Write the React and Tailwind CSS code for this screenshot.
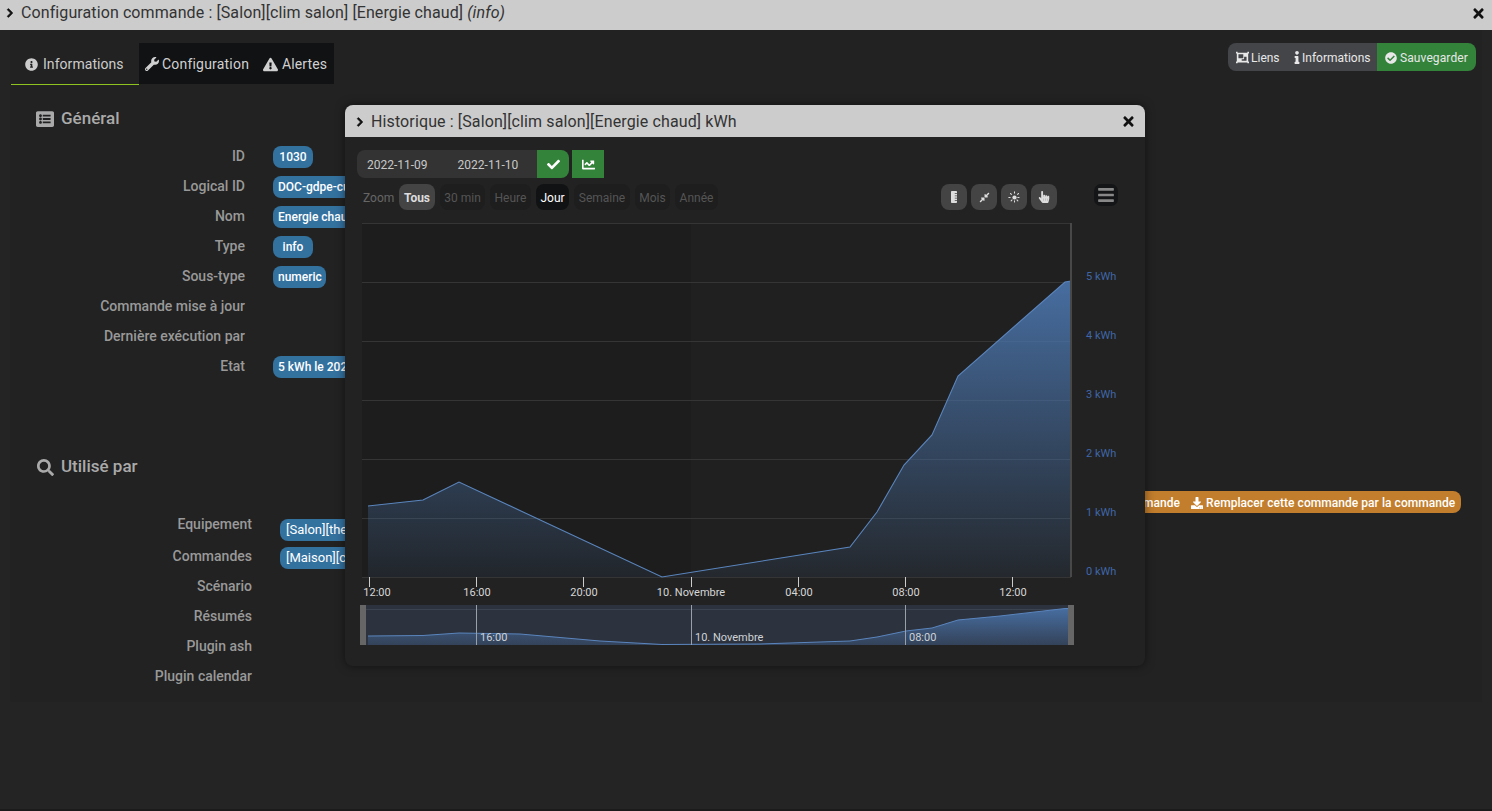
import React from 'react';
import { FaChevronRight, FaTimes, FaInfoCircle, FaWrench, FaExclamationTriangle, FaListAlt, FaSearch, FaCheck, FaChartLine, FaCheckCircle, FaInfo, FaDownload, FaHandPointer, FaRulerVertical, FaCompressAlt, FaBars, FaObjectGroup } from 'react-icons/fa';

const font = 'font-["Roboto",sans-serif]';

const generalRows = [
  ['ID', '1030', 'w-[40px] justify-center'],
  ['Logical ID', 'DOC-gdpe-cuivre', 'w-[120px]'],
  ['Nom', 'Energie chaud', 'w-[120px]'],
  ['Type', 'info', 'w-[40px] justify-center'],
  ['Sous-type', 'numeric', 'w-[53px]'],
  ['Commande mise à jour', null, ''],
  ['Dernière exécution par', null, ''],
  ['Etat', '5 kWh le 2022-11-10', 'w-[120px]'],
];

const usedRows = [
  ['Equipement', '[Salon][thermostat]', 'mt-[5px]'],
  ['Commandes', '[Maison][conso]', 'mt-[1px]'],
  ['Scénario', null, ''],
  ['Résumés', null, ''],
  ['Plugin ash', null, ''],
  ['Plugin calendar', null, ''],
];

const zoomBtns = [
  ['30 min', 'w-[45px] text-[#555] bg-[#1e1e1e]'],
  ['Heure', 'w-[41px] text-[#555] bg-[#1e1e1e]'],
  ['Jour', 'w-[33px] text-white bg-[#111214]'],
  ['Semaine', 'w-[56px] text-[#555] bg-[#1e1e1e]'],
  ['Mois', 'w-[35px] text-[#555] bg-[#1e1e1e]'],
  ['Année', 'w-[43px] text-[#555] bg-[#1e1e1e]'],
];

const gridY = [223, 282, 341, 400, 459, 518, 577];
const yLabels = [['5 kWh', 280], ['4 kWh', 339], ['3 kWh', 398], ['2 kWh', 457], ['1 kWh', 516], ['0 kWh', 575]];
const xTicks = [[369, 377, '12:00'], [476, 477, '16:00'], [583, 584, '20:00'], [691, 691, '10. Novembre'], [798, 799, '04:00'], [905, 906, '08:00'], [1012, 1013, '12:00']];

const line = 'M368 506 L423 500 L459 482 L662 577 L850 547 L877 512 L904 465 L932 435 L958 376 L1065 282 L1071 281';
const navLine = 'M368 636 L423 635.5 L459 633 L520 634 L600 641 L662 644.5 L760 644 L850 641 L877 637 L906 631 L932 628 L958 620 L1000 616 L1065 608.5 L1068 608.5';

const SunDots = () => (
  <svg viewBox="0 0 16 16" className="w-[13px] h-[13px]">
    <circle cx="8" cy="8" r="2.6" fill="currentColor" />
    <g stroke="currentColor" strokeWidth="1.3" strokeLinecap="round" strokeDasharray="1.6 1.4">
      <path d="M8 1 V4" />
      <path d="M8 12 V15" />
      <path d="M1 8 H4" />
      <path d="M12 8 H15" />
      <path d="M3 3 L5 5" />
      <path d="M11 11 L13 13" />
      <path d="M13 3 L11 5" />
      <path d="M5 11 L3 13" />
    </g>
  </svg>
);

const Chart = () => (
  <svg viewBox="357 180 765 471" className="block w-[765px] h-[471px]">
    <defs>
      <linearGradient id="areaFill" x1="0" y1="0" x2="0" y2="1">
        <stop offset="0" stopColor="#4a74ab" stopOpacity="0.92" />
        <stop offset="1" stopColor="#4a74ab" stopOpacity="0.1" />
      </linearGradient>
      <linearGradient id="navFill" x1="0" y1="0" x2="0" y2="1">
        <stop offset="0" stopColor="#4a74ab" stopOpacity="0.9" />
        <stop offset="1" stopColor="#4a74ab" stopOpacity="0.25" />
      </linearGradient>
    </defs>
    <rect x="362" y="223" width="329" height="354" fill="#1d1d1d" />
    <rect x="691" y="223" width="380" height="354" fill="#202020" />
    {gridY.map((y) => (
      <line key={y} x1="362" x2="1071" y1={y + 0.5} y2={y + 0.5} stroke="#353535" strokeWidth="1" />
    ))}
    <path d={`${line} L1071 577 L368 577 Z`} fill="url(#areaFill)" />
    <path d={line} fill="none" stroke="#5a85bd" strokeWidth="1.1" />
    <line x1="1071" x2="1071" y1="223" y2="577" stroke="#484848" strokeWidth="2" />
    {xTicks.map(([x, lx, label]) => (
      <g key={label + x}>
        <line x1={x + 0.5} x2={x + 0.5} y1="577" y2="587" stroke="#ccc" strokeWidth="1" />
        <text x={lx} y="596" textAnchor="middle" fontSize="11" fontFamily="Roboto, sans-serif" fill="#d6d6d6">{label}</text>
      </g>
    ))}
    {yLabels.map(([label, y]) => (
      <text key={label} x="1086" y={y} fontSize="11" fontFamily="Roboto, sans-serif" fill="#3f66a8">{label}</text>
    ))}
    <rect x="360" y="605" width="713" height="40" fill="#2c323e" />
    <line x1="360" x2="1073" y1="609.5" y2="609.5" stroke="#3b4250" strokeWidth="1" />
    <path d={`${navLine} L1068 645 L368 645 Z`} fill="url(#navFill)" />
    <path d={navLine} fill="none" stroke="#5a85bd" strokeWidth="1" />
    {[[476, 480, '16:00'], [691, 695, '10. Novembre'], [905, 909, '08:00']].map(([x, lx, label]) => (
      <g key={label}>
        <line x1={x + 0.5} x2={x + 0.5} y1="605" y2="645" stroke="#9aa0aa" strokeWidth="1" />
        <text x={lx} y="641" fontSize="11" fontFamily="Roboto, sans-serif" fill="#cfd2d6">{label}</text>
      </g>
    ))}
    <rect x="360" y="605" width="6" height="40" fill="#666" />
    <rect x="1068" y="605" width="6" height="40" fill="#666" />
  </svg>
);

const Badge = ({ text, width, mono }) => (
  <span className={`flex items-center h-[22px] rounded-[8px] bg-[#33719f] overflow-hidden whitespace-nowrap text-white ${mono ? 'px-[6px] text-[13px] font-normal' : 'px-[5px] text-[12px] font-medium'} ${width}`}>
    {text}
  </span>
);

const Chevron = () => (
  <FaChevronRight size={10} stroke="currentColor" strokeWidth={40} className="text-[#111]" />
);

const HistoryDialog = () => (
  <div className="absolute left-[345px] top-[105px] w-[800px] h-[561px] rounded-[8px] bg-[#222222] overflow-hidden shadow-[0_0_10px_rgba(0,0,0,0.5)]">
    <div className="flex items-center justify-between h-[32px] bg-[#cccccc] pt-[1px] pl-[10px] pr-[9px] text-[#333]">
      <div className="flex items-center gap-[6px]">
        <Chevron />
        <span className="text-[16px] tracking-[0.12px]">Historique : [Salon][clim salon][Energie chaud] kWh</span>
      </div>
      <FaTimes size={15} className="text-[#111]" />
    </div>
    <div className="flex h-[28px] mt-[13px] ml-[12px]">
      <div className="flex items-center w-[180px] h-[28px] pt-[1px] bg-[#333333] rounded-l-[8px] text-[12px] text-[#c8c8c8] pl-[10px] gap-[30px]">
        <span>2022-11-09</span>
        <span>2022-11-10</span>
      </div>
      <div className="flex items-center justify-center w-[32px] h-[28px] bg-[#33833b] rounded-r-[8px] text-white">
        <FaCheck size={13} />
      </div>
      <div className="flex items-center justify-center w-[32px] h-[28px] ml-[3px] bg-[#33833b] text-white">
        <FaChartLine size={13} />
      </div>
    </div>
    <div className="relative ml-[12px] mt-[2px] w-[765px] h-[471px]">
      <Chart />
      <div className="absolute left-[6px] top-[4px] flex items-center gap-[5px] text-[12px] leading-none">
        <span className="w-[31px] pt-[1px] text-[#666] whitespace-nowrap">Zoom</span>
        <span className="flex items-center justify-center w-[36px] h-[26px] pt-[1px] rounded-[8px] bg-[#444] text-[#ddd] font-bold">Tous</span>
        {zoomBtns.map(([label, cls]) => (
          <span key={label} className={`flex items-center justify-center h-[26px] pt-[1px] rounded-[8px] ${cls}`}>{label}</span>
        ))}
      </div>
      <div className="absolute left-[584px] top-[4px] flex gap-[4px] text-[#ddd]">
        <span className="flex items-center justify-center w-[26px] h-[26px] rounded-[8px] bg-[#444]"><FaRulerVertical size={12} /></span>
        <span className="flex items-center justify-center w-[26px] h-[26px] rounded-[8px] bg-[#444]"><FaCompressAlt size={11} /></span>
        <span className="flex items-center justify-center w-[26px] h-[26px] rounded-[8px] bg-[#444]"><SunDots /></span>
        <span className="flex items-center justify-center w-[26px] h-[26px] rounded-[8px] bg-[#444]"><FaHandPointer size={12} /></span>
      </div>
      <div className="absolute left-[737px] top-[4px] flex items-center justify-center w-[24px] h-[22px] rounded-[7px] bg-[#141517] text-[#888]">
        <FaBars size={18} />
      </div>
    </div>
  </div>
);

export default function App() {
  return (
    <div className={`relative w-[1492px] h-[811px] overflow-hidden bg-[#242424] ${font}`}>
      <div className="flex items-center justify-between h-[30px] pb-[4px] bg-[#cccccc] pl-[5px] pr-[6px] text-[#333]">
        <div className="flex items-center gap-[6px]">
          <Chevron />
          <span className="text-[16px] tracking-[0.1px]">Configuration commande : [Salon][clim salon] [Energie chaud] <em>(info)</em></span>
        </div>
        <FaTimes size={15} className="text-[#111]" />
      </div>

      <div className="mx-[10px] h-[672px] bg-[#222222]">
        <div className="flex items-start justify-between h-[42px] pt-[13px] pr-[6px] box-content">
          <div className="flex text-[14px] h-[42px]">
            <div className="flex items-center gap-[5px] w-[128px] ml-[1px] pl-[14px] pt-[1px] text-[#ccc] border-b border-[#8fc31f] tracking-[0.05px]">
              <FaInfoCircle size={13} />
              <span>Informations</span>
            </div>
            <div className="flex items-center gap-[3px] w-[117px] pl-[6px] pt-[1px] h-[41px] bg-[#111214] text-[#d0d0d0] tracking-[0.2px]">
              <FaWrench size={14} />
              <span>Configuration</span>
            </div>
            <div className="flex items-center gap-[4px] w-[78px] pl-[7px] pt-[1px] h-[41px] bg-[#111214] text-[#d0d0d0] tracking-[0.1px]">
              <FaExclamationTriangle size={15} />
              <span>Alertes</span>
            </div>
          </div>
          <div className="flex h-[28px] text-[12px] text-[#e8e8e8] rounded-[8px] overflow-hidden">
            <div className="flex items-center gap-[2px] w-[58px] pl-[8px] pt-[1px] bg-[#444548]">
              <FaObjectGroup size={13} />
              <span>Liens</span>
            </div>
            <div className="flex items-center gap-[2px] w-[91px] pl-[8px] pt-[1px] bg-[#444548]">
              <FaInfo className="w-[6px] h-[13px]" />
              <span>Informations</span>
            </div>
            <div className="flex items-center gap-[3px] w-[99px] pl-[8px] pt-[1px] bg-[#33833b] tracking-[0.1px]">
              <FaCheckCircle size={12} />
              <span>Sauvegarder</span>
            </div>
          </div>
        </div>

        <div className="flex items-center gap-[7px] ml-[26px] mt-[22px] h-[24px] text-[#aaa]">
          <FaListAlt size={18} />
          <span className="text-[17px] font-medium">Général</span>
        </div>

        <div className="flex flex-col gap-[8px] mt-[14px] text-[14px] font-medium text-[#999]">
          {generalRows.map(([label, value, width]) => (
            <div key={label} className="flex items-center h-[22px]">
              <span className="w-[235px] text-right">{label}</span>
              {value && <span className="ml-[28px] mt-[2px]"><Badge text={value} width={width} /></span>}
            </div>
          ))}
        </div>

        <div className="flex items-center gap-[7px] ml-[27px] mt-[78px] h-[24px] text-[#aaa]">
          <FaSearch size={17} />
          <span className="text-[17px] font-medium w-[77px] overflow-hidden whitespace-nowrap">Utilisé par</span>
        </div>

        <div className="flex flex-col mt-[35px] text-[14px] font-medium text-[#999]">
          {usedRows.map(([label, value, offset], i) => (
            <div key={label} className={`flex h-[22px] ${i < 1 ? 'mb-[10px]' : 'mb-[8px]'}`}>
              <span className="w-[242px] text-right">{label}</span>
              {value && <span className={`ml-[28px] ${offset}`}><Badge text={value} width="w-[90px]" mono /></span>}
            </div>
          ))}
        </div>
      </div>

      <div className="absolute left-[1100px] top-[491px] flex items-center h-[22px] pt-[1px] w-[361px] rounded-r-[8px] bg-[#c27e2c] text-[12px] text-white font-medium tracking-[0.05px] whitespace-nowrap">
        <span className="ml-[43px]">mande</span>
        <FaDownload size={12} className="ml-[11px] mr-[3px]" />
        <span>Remplacer cette commande par la commande</span>
      </div>

      <div className="absolute left-0 right-0 bottom-0 h-[2px] bg-[#1b1b1b]" />

      <HistoryDialog />
    </div>
  );
}
